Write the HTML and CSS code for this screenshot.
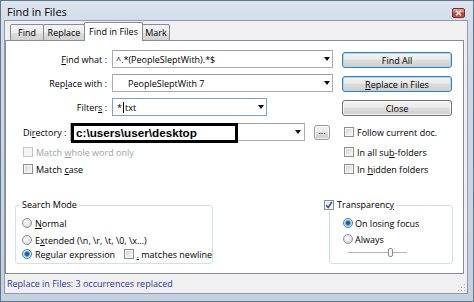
FILE: index.html
```html
<!DOCTYPE html>
<html>
<head>
<meta charset="utf-8">
<title>Find in Files</title>
<link rel="stylesheet" href="styles.css">
</head>
<body>
<div class="window">
  <div class="titlebar">
    <span class="title">Find in Files</span>
    <span class="close"><svg width="7" height="6" viewBox="0 0 7 6"><path d="M1 0.8 L6 5.2 M6 0.8 L1 5.2" stroke="#fff" stroke-width="1.5" fill="none"/></svg></span>
  </div>
  <div class="client">
    <div class="tabs">
      <div class="tab t-find">Find</div>
      <div class="tab t-replace">Replace</div>
      <div class="tab t-files active">Find in Files</div>
      <div class="tab t-mark">Mark</div>
    </div>
    <div class="panel">
      <div class="top">
        <div class="fields">
          <div class="row"><span class="lbl"><u>F</u>ind what :</span><div class="combo c-find"><span class="val">^.*(PeopleSleptWith).*$</span><span class="arrow"></span></div></div>
          <div class="row"><span class="lbl">Rep<u>l</u>ace with :</span><div class="combo c-find"><span class="val indent">PeopleSleptWith 7</span><span class="arrow"></span></div></div>
          <div class="row"><span class="lbl">Filter<u>s</u> :</span><div class="combo c-filter focus"><span class="val filt">*<i class="caret"></i>txt</span><span class="arrow"></span></div></div>
        </div>
        <div class="buttons">
          <div class="btn default"><span>Find All</span></div>
          <div class="btn default"><span><u>R</u>eplace in Files</span></div>
          <div class="btn"><span>Close</span></div>
        </div>
      </div>
      <div class="mid">
        <div class="dir-row">
          <span class="dlbl">Di<u>r</u>ectory :</span>
          <div class="combo c-dir"><span class="mark">c:\users\user\desktop</span><span class="arrow"></span></div>
          <div class="btn small"><span>...</span></div>
        </div>
        <div class="check right"><span class="box"></span><span>Follow current doc.</span></div>
        <div class="check left disabled"><span class="box"></span><span>Match <u>w</u>hole word only</span></div>
        <div class="check right"><span class="box"></span><span>In all su<u>b</u>-folders</span></div>
        <div class="check left"><span class="box"></span><span>Match <u>c</u>ase</span></div>
        <div class="check right"><span class="box"></span><span>In <u>h</u>idden folders</span></div>
      </div>
      <div class="groups">
        <div class="group search">
          <span class="legend">Search Mode</span>
          <div class="opt o1"><span class="radio"></span><span><u>N</u>ormal</span></div>
          <div class="opt o2"><span class="radio"></span><span>E<u>x</u>tended (\n, \r, \t, \0, \x...)</span></div>
          <div class="opt o3"><div class="regex"><span class="radio on"></span><span>Regular expression</span></div><span class="box"></span><span><u>.</u> matches newline</span></div>
        </div>
        <div class="group transp">
          <span class="legend tlegend"><span class="box checked"><svg width="8" height="8" viewBox="0 0 8 8"><path d="M1.2 4.2 L3.2 6.6 L6.8 1" stroke="#3d4f8c" stroke-width="1.5" fill="none"/></svg></span><span>Transparenc<u>y</u></span></span>
          <div class="opt t1"><span class="radio on"></span><span>On losing focus</span></div>
          <div class="opt t2"><span class="radio"></span><span>Always</span></div>
          <div class="slider"><span class="thumb"></span></div>
        </div>
      </div>
    </div>
    <div class="status"><span>Replace in Files: 3 occurrences replaced</span><span class="grip"></span></div>
  </div>
</div>
</body>
</html>
```

FILE: styles.css
```css
* { box-sizing: border-box; margin: 0; padding: 0; }
html, body { width: 474px; height: 302px; overflow: hidden; }
body {
  font-family: "Open Sans", "Noto Sans", sans-serif;
  font-size: 9px;
  color: #000;
  background: #c8d5e3;
}
u { text-decoration: underline; text-underline-offset: 1px; }

.window {
  width: 474px;
  height: 302px;
  display: flex;
  flex-direction: column;
  border: 1px solid #62768c;
  padding: 0 5px 7px 3px;
  background: linear-gradient(180deg, #dde6ef 0, #d2dde9 20px, #c3d1e0 100%);
}

.titlebar {
  height: 19px;
  flex-shrink: 0;
  display: flex;
  align-items: flex-start;
}
.title {
  font-size: 11px;
  line-height: 14px;
  margin: 4px 0 0 3px;
}
.close {
  margin: 7px 3px 0 auto;
  width: 13px;
  height: 10px;
  border: 1px solid #7a3026;
  border-radius: 2px;
  background: linear-gradient(180deg, #e3a497 0, #d0705f 45%, #b8402c 55%, #c75a3e 100%);
  display: flex;
  align-items: center;
  justify-content: center;
}
.close svg { display: block; }

.client {
  flex: 1;
  display: flex;
  flex-direction: column;
  background: #f0f0f0;
  border: 1px solid #8b9cb0;
}

.tabs {
  height: 19px;
  flex-shrink: 0;
  display: flex;
  align-items: flex-end;
  padding-left: 5px;
}
.tab {
  height: 16px;
  border: 1px solid #898c95;
  border-bottom: none;
  border-radius: 2px 2px 0 0;
  background: linear-gradient(180deg, #f4f4f4 0, #ececec 50%, #dedede 51%, #d2d2d2 100%);
  line-height: 15px;
  text-align: center;
  margin-left: -1px;
}
.t-find { width: 34px; margin-left: 0; }
.t-replace { width: 42px; }
.t-files { width: 59px; }
.t-mark { width: 28px; }
.tab.active {
  height: 19px;
  margin-bottom: -1px;
  background: #fff;
  line-height: 17px;
  position: relative;
  z-index: 2;
}

.panel {
  flex: 1;
  border: 1px solid #898c95;
  background: #fff;
  margin-right: 3px;
  display: flex;
  flex-direction: column;
}

.top { display: flex; margin-top: 9px; }
.fields { display: flex; flex-direction: column; gap: 6px; }
.row { display: flex; align-items: center; height: 18px; }
.lbl { width: 101px; text-align: right; }

.combo {
  position: relative;
  height: 18px;
  margin-left: 5px;
  border: 1px solid #abadb3;
  border-top-color: #9da2aa;
  background: #fff;
  display: flex;
  align-items: center;
}
.c-find { width: 221px; }
.c-filter { width: 155px; }
.combo.focus { border-color: #7da2ce; }
.val { padding-left: 3px; white-space: pre; }
.val.indent { padding-left: 15px; }
.val.filt { padding-left: 4px; display: flex; align-items: center; }
.caret {
  display: inline-block;
  width: 1px;
  height: 11px;
  background: #000;
  margin: 0 1px;
}
.arrow {
  margin-left: auto;
  margin-right: 2px;
  width: 0;
  height: 0;
  border-left: 3.5px solid transparent;
  border-right: 3.5px solid transparent;
  border-top: 4px solid #111;
}

.buttons {
  display: flex;
  flex-direction: column;
  gap: 8px;
  margin: 2px 0 0 9px;
}
.btn {
  width: 110px;
  height: 16px;
  border: 1px solid #707070;
  border-radius: 3px;
  background: linear-gradient(180deg, #f3f3f3 0, #ebebeb 45%, #dddddd 50%, #cfcfcf 100%);
  box-shadow: inset 0 0 0 1px rgba(255, 255, 255, 0.75);
  display: flex;
  align-items: center;
  justify-content: center;
}
.btn.default {
  border-color: #3c7fb1;
  box-shadow: inset 0 0 0 1px #a6d9f3;
}
.btn.small {
  width: 16px;
  height: 15px;
  margin-left: 9px;
  border-color: #9a9a9a;
  line-height: 1;
  padding-bottom: 3px;
}

.mid {
  display: grid;
  grid-template-columns: 338px 1fr;
  grid-template-rows: 20px 18px 16px;
  margin-top: 7px;
}
.dir-row {
  display: flex;
  align-items: center;
  height: 18px;
  padding-left: 17px;
}
.dlbl { width: 47px; }
.c-dir { width: 235px; margin-left: 0; }
.c-dir .arrow { margin-right: 3px; }
.mark {
  position: absolute;
  left: 0;
  top: -1px;
  width: 167px;
  height: 20px;
  border: 3px solid #000;
  background: #fff;
  padding-left: 2px;
  font-family: "Liberation Sans", Arial, sans-serif;
  font-weight: bold;
  font-size: 11.7px;
  line-height: 14px;
  white-space: nowrap;
}

.check {
  display: flex;
  align-items: center;
  gap: 3px;
  height: 18px;
  align-self: start;
  white-space: nowrap;
}
.check.left { padding-left: 17px; }
.check.disabled { color: #a3a3a3; }
.check.disabled .box { border-color: #c4c4c4; background: #f4f4f4; }
.mid .check:nth-child(5), .mid .check:nth-child(6) { height: 16px; }

.box {
  flex-shrink: 0;
  width: 10px;
  height: 10px;
  border: 1px solid #8e8f8f;
  background: linear-gradient(135deg, #cdd0d3 0, #e9e9e9 55%, #f9f9f9 100%);
  box-shadow: inset 0 0 0 1px #f6f6f6;
  display: flex;
  align-items: center;
  justify-content: center;
}
.box svg { display: block; }
.box.checked { background: linear-gradient(135deg, #dfe3e8 0, #f4f4f4 100%); }

.radio {
  flex-shrink: 0;
  width: 10px;
  height: 10px;
  border-radius: 50%;
  border: 1px solid #8f9092;
  background: radial-gradient(circle at 40% 40%, #ffffff 0, #e6e6e6 50%, #c9c9c9 100%);
}
.radio.on {
  border-color: #52789f;
  background: radial-gradient(circle at 50% 50%, #0c4b86 0, #1f6aaa 1.6px, #7cc0ea 2.8px, #dcecf6 3.6px, #d0d0d0 5px);
}

.groups {
  display: flex;
  margin-top: 28px;
}
.group {
  position: relative;
  height: 59px;
  border: 1px solid #d5dfe5;
  border-radius: 3px;
}
.search { margin-left: 9px; width: 198px; }
.transp { margin-left: auto; margin-right: 10px; width: 124px; }
.legend {
  position: absolute;
  top: -7px;
  left: 4px;
  line-height: 12px;
  padding: 0 2px;
  background: #fff;
  white-space: nowrap;
}
.tlegend {
  left: -6px;
  padding: 0 2px 0 0;
  display: flex;
  align-items: center;
  gap: 3px;
}

.opt {
  display: flex;
  align-items: center;
  gap: 3px;
  height: 14px;
  padding-left: 6px;
  white-space: nowrap;
}
.o1 { margin-top: 10px; }
.o2 { margin-top: 3px; }
.o3 { margin-top: 0; }
.regex { display: flex; align-items: center; gap: 3px; width: 102px; }
.t1, .t2 { padding-left: 13px; gap: 2px; }
.t1 { margin-top: 10px; }
.t2 { margin-top: 2px; }

.slider {
  position: relative;
  margin: 6px 0 0 18px;
  width: 59px;
  height: 2px;
  border-top: 1px solid #b3b3b3;
  border-bottom: 1px solid #fdfdfd;
}
.thumb {
  position: absolute;
  left: 40px;
  top: -5px;
  width: 5px;
  height: 9px;
  border: 1px solid #8f8f8f;
  border-radius: 2px;
  background: #fafafa;
}

.status {
  height: 19px;
  flex-shrink: 0;
  display: flex;
  align-items: center;
  padding-left: 2px;
  color: #3232b4;
}
.grip {
  margin: auto 2px 2px auto;
  width: 8px;
  height: 8px;
  background:
    radial-gradient(circle, #b0b6bd 0 0.8px, transparent 1px) 0 0 / 3px 3px;
  clip-path: polygon(100% 0, 100% 100%, 0 100%);
}
```
